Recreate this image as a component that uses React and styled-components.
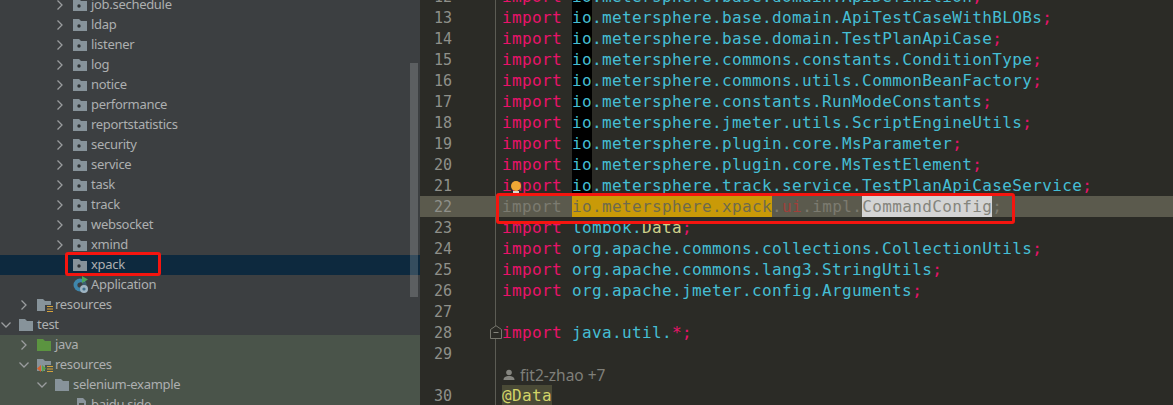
import React from "react";
import styled, { createGlobalStyle } from "styled-components";

const GlobalStyle = createGlobalStyle`
  html, body {
    margin: 0;
    padding: 0;
    background: #3c3f41;
  }
`;

const treeRows = [
  { label: "job.sechedule", level: 3, arrow: "right", icon: "package" },
  { label: "ldap", level: 3, arrow: "right", icon: "package" },
  { label: "listener", level: 3, arrow: "right", icon: "package" },
  { label: "log", level: 3, arrow: "right", icon: "package" },
  { label: "notice", level: 3, arrow: "right", icon: "package" },
  { label: "performance", level: 3, arrow: "right", icon: "package" },
  { label: "reportstatistics", level: 3, arrow: "right", icon: "package" },
  { label: "security", level: 3, arrow: "right", icon: "package" },
  { label: "service", level: 3, arrow: "right", icon: "package" },
  { label: "task", level: 3, arrow: "right", icon: "package" },
  { label: "track", level: 3, arrow: "right", icon: "package" },
  { label: "websocket", level: 3, arrow: "right", icon: "package" },
  { label: "xmind", level: 3, arrow: "right", icon: "package" },
  { label: "xpack", level: 3, icon: "package", selected: true },
  { label: "Application", level: 3, icon: "app" },
  { label: "resources", level: 1, arrow: "right", icon: "resources" },
  { label: "test", level: 0, arrow: "down", icon: "folder" },
  { label: "java", level: 1, arrow: "right", icon: "green", scoped: true },
  { label: "resources", level: 1, arrow: "down", icon: "testResources", scoped: true },
  { label: "selenium-example", level: 2, arrow: "down", icon: "folder", scoped: true },
  { label: "baidu.side", level: 3, icon: "file", scoped: true },
];

const imports = [
  [12, "io.metersphere.base.domain.ApiDefinition"],
  [13, "io.metersphere.base.domain.ApiTestCaseWithBLOBs"],
  [14, "io.metersphere.base.domain.TestPlanApiCase"],
  [15, "io.metersphere.commons.constants.ConditionType"],
  [16, "io.metersphere.commons.utils.CommonBeanFactory"],
  [17, "io.metersphere.constants.RunModeConstants"],
  [18, "io.metersphere.jmeter.utils.ScriptEngineUtils"],
  [19, "io.metersphere.plugin.core.MsParameter"],
  [20, "io.metersphere.plugin.core.MsTestElement"],
  [21, "io.metersphere.track.service.TestPlanApiCaseService"],
];

const laterImports = [
  [24, "org.apache.commons.collections.CollectionUtils"],
  [25, "org.apache.commons.lang3.StringUtils"],
  [26, "org.apache.jmeter.config.Arguments"],
];

const Arrow = ({ dir }) => (
  <svg width="10" height="10" viewBox="0 0 10 10">
    <path
      d={dir === "down" ? "M0.5 2.5 L5 7 L9.5 2.5" : "M2.5 0.5 L7 5 L2.5 9.5"}
      fill="none"
      stroke="#9a9c9e"
      strokeWidth="1.3"
    />
  </svg>
);

const FOLDER = "M0 0 H6 L8 2 H14 V12 H0 Z";

const TreeIcon = ({ type }) => {
  if (type === "app") {
    return (
      <svg width="16" height="18" viewBox="0 0 16 18">
        <circle cx="7" cy="9" r="6.5" fill="#3f86ab" />
        <circle cx="7" cy="9" r="2.6" fill="#3c3f41" />
        <path d="M7 6 H14 V12 H7 Z" fill="#3c3f41" opacity="0.55" />
        <path d="M9 0 L15 3.5 L9 7 Z" fill="#4fa45a" />
        <circle cx="11" cy="13" r="4" fill="#9fb4c2" />
        <circle cx="11" cy="13" r="1.6" fill="#3f6f8c" />
      </svg>
    );
  }
  if (type === "file") {
    return (
      <svg width="16" height="16" viewBox="0 0 16 16">
        <path d="M4 1 H10 L13 4 V15 H4 Z" fill="#8a949b" />
        <path d="M6 6 H11 V13 H6 Z" fill="#4c5349" />
      </svg>
    );
  }
  const fill = type === "green" ? "#5b9440" : "#87939a";
  return (
    <svg width="16" height="16" viewBox="0 0 16 16">
      <path d={FOLDER} transform="translate(0 2)" fill={fill} />
      {type === "package" && <circle cx="6" cy="9" r="1.7" fill="#2e3335" />}
      {(type === "resources" || type === "testResources") && (
        <>
          <path d="M8 8 H16 V16 H8 Z" fill={type === "resources" ? "#3c3f41" : "#4a544a"} />
          <path d="M10 9.5 H16 M10 12 H16 M10 14.5 H16" stroke="#d4a33c" strokeWidth="1" />
        </>
      )}
      {type === "testResources" && (
        <>
          <path d="M0 11.5 L4 8 V15 Z" fill="#d4622f" />
          <path d="M5 8 L9 11.5 L5 15 Z" fill="#58a14a" />
        </>
      )}
    </svg>
  );
};

const UserIcon = () => (
  <svg width="12" height="12" viewBox="0 0 12 12">
    <circle cx="6" cy="3.5" r="2.8" fill="#85857f" />
    <path d="M0.5 11 C0.5 8 3 7 6 7 C9 7 11.5 8 11.5 11 Z" fill="#85857f" />
  </svg>
);

const FoldIcon = () => (
  <svg width="12" height="14" viewBox="0 0 12 14">
    <path d="M0.5 4.5 L6 0.7 L11.5 4.5 V13.5 H0.5 Z" fill="#2b2b26" stroke="#77776e" />
    <path d="M3.5 7.5 H8.5" stroke="#85857c" />
  </svg>
);

export default function App() {
  return (
    <>
      <GlobalStyle />
      <Window>
        <ProjectPane>
          <Tree>
            {treeRows.map((row, i) => (
              <TreeRow key={i} $selected={row.selected} $scoped={row.scoped} $level={row.level}>
                <ArrowSlot>{row.arrow && <Arrow dir={row.arrow} />}</ArrowSlot>
                <IconSlot>
                  <TreeIcon type={row.icon} />
                </IconSlot>
                <TreeLabel>{row.label}</TreeLabel>
              </TreeRow>
            ))}
          </Tree>
          <Scrollbar />
          <XpackMark />
        </ProjectPane>

        <EditorPane>
          <Lines>
            {imports.map(([n, path]) => (
              <Line key={n}>
                <LineNumber>{n}</LineNumber>
                <Code>
                  <Keyword>import </Keyword>
                  <Marked $bg="#000" $color="#45bed4">{path.slice(0, 2)}</Marked>
                  <Pkg>{path.slice(2)}</Pkg>
                  <Keyword>;</Keyword>
                </Code>
              </Line>
            ))}
            <Line $active>
              <LineNumber $active>22</LineNumber>
              <Code>
                <Marked>import </Marked>
                <Marked $bg="#c99a08" $color="#6f6b4b">io.metersphere.xpack</Marked>
                <Marked>.</Marked>
                <Marked $color="#a0403a">ui</Marked>
                <Marked>.impl.</Marked>
                <Marked $bg="#d4d4d4" $color="#85857d">CommandConfig</Marked>
                <Marked>;</Marked>
              </Code>
            </Line>
            <Line>
              <LineNumber>23</LineNumber>
              <Code>
                <Keyword>import </Keyword>
                <Pkg>lombok.</Pkg>
                <ClassName>Data</ClassName>
                <Keyword>;</Keyword>
              </Code>
            </Line>
            {laterImports.map(([n, path]) => (
              <Line key={n}>
                <LineNumber>{n}</LineNumber>
                <Code>
                  <Keyword>import </Keyword>
                  <Pkg>{path}</Pkg>
                  <Keyword>;</Keyword>
                </Code>
              </Line>
            ))}
            <Line>
              <LineNumber>27</LineNumber>
              <Code />
            </Line>
            <Line>
              <LineNumber>28</LineNumber>
              <Code>
                <Keyword>import </Keyword>
                <Pkg>java.util.</Pkg>
                <Keyword>*;</Keyword>
              </Code>
              <FoldMark>
                <FoldIcon />
              </FoldMark>
            </Line>
            <Line>
              <LineNumber>29</LineNumber>
              <Code />
            </Line>
            <Line>
              <LineNumber />
              <AuthorHint>
                <UserIcon />
                fit2-zhao +7
              </AuthorHint>
            </Line>
            <Line>
              <LineNumber>30</LineNumber>
              <Code>
                <Marked $bg="#4a4a36" $color="#d3d468">@Data</Marked>
              </Code>
            </Line>
          </Lines>
          <Bulb />
          <ImportMark />
        </EditorPane>
      </Window>
    </>
  );
}

const Window = styled.div`
  display: flex;
  width: 1173px;
  height: 405px;
  overflow: hidden;
  background: #2b2b26;
`;

const ProjectPane = styled.div`
  position: relative;
  width: 420px;
  flex: none;
  background: #3c3f41;
  overflow: hidden;
`;

const Tree = styled.div`
  margin-top: -5px;
  display: flex;
  flex-direction: column;
`;

const TreeRow = styled.div`
  display: flex;
  align-items: center;
  height: 20px;
  flex: none;
  padding-left: ${(p) => p.$level * 18}px;
  background: ${(p) => (p.$selected ? "#0d293e" : p.$scoped ? "#4a544a" : "transparent")};
`;

const ArrowSlot = styled.div`
  width: 19px;
  height: 20px;
  display: flex;
  align-items: center;
  padding-left: 1px;
  box-sizing: border-box;
`;

const IconSlot = styled.div`
  width: 18px;
  height: 20px;
  display: flex;
  align-items: center;
`;

const TreeLabel = styled.span`
  font-family: "Noto Sans", sans-serif;
  font-size: 13px;
  letter-spacing: -0.3px;
  line-height: 18px;
  margin-bottom: 2px;
  color: #adafb0;
  white-space: nowrap;
`;

const Scrollbar = styled.div`
  position: absolute;
  left: 410px;
  top: 63px;
  width: 8px;
  height: 234px;
  background: rgba(255, 255, 255, 0.17);
`;

const XpackMark = styled.div`
  position: absolute;
  left: 65px;
  top: 252px;
  width: 90px;
  height: 18px;
  border: 3px solid #f5150f;
  border-radius: 3px;
`;

const EditorPane = styled.div`
  position: relative;
  flex: 1;
  overflow: hidden;
`;

const Lines = styled.div`
  margin-top: -14px;
  display: flex;
  flex-direction: column;
`;

const Line = styled.div`
  position: relative;
  display: flex;
  flex: none;
  height: 21px;
  background: ${(p) => (p.$active ? "#5b5a4d" : "transparent")};
`;

const LineNumber = styled.div`
  width: 32px;
  padding: 2px 43px 0 0;
  flex: none;
  text-align: right;
  font-family: "DejaVu Sans Mono", monospace;
  font-size: 15px;
  line-height: 19px;
  color: #8f908a;
  border-right: 1px solid ${(p) => (p.$active ? "#5b5a4d" : "#5c5c54")};
`;

const Code = styled.div`
  padding: 1px 0 0 6px;
  font-family: "DejaVu Sans Mono", monospace;
  font-size: 16px;
  letter-spacing: 0.37px;
  line-height: 20px;
  white-space: pre;
`;

const Keyword = styled.span`
  color: #e9136a;
`;

const Pkg = styled.span`
  color: #45bed4;
`;

const ClassName = styled.span`
  color: #cfd08a;
`;

// background runs the full line height, the text stays on the code baseline
const Marked = styled.span`
  display: inline-block;
  box-sizing: border-box;
  height: 21px;
  margin-top: -1px;
  padding-top: 1px;
  background: ${(p) => p.$bg || "transparent"};
  color: ${(p) => p.$color || "#7c7b70"};
`;

const AuthorHint = styled.div`
  display: flex;
  align-items: center;
  gap: 5px;
  padding-left: 7px;
  font-family: "Noto Sans", sans-serif;
  font-size: 15.5px;
  color: #7f7f79;
`;

const FoldMark = styled.div`
  position: absolute;
  left: 70px;
  top: 3px;
  line-height: 0;
`;

const Bulb = styled.div`
  position: absolute;
  left: 91px;
  top: 181px;
  width: 10px;
  height: 10px;
  border-radius: 50%;
  background: #eea735;
  &::after {
    content: "";
    position: absolute;
    left: 2px;
    top: 10px;
    width: 6px;
    height: 2px;
    background: #d8d8d0;
  }
`;

const ImportMark = styled.div`
  position: absolute;
  left: 76px;
  top: 193px;
  width: 513px;
  height: 25px;
  border: 3px solid #f5150f;
  border-radius: 3px;
`;
